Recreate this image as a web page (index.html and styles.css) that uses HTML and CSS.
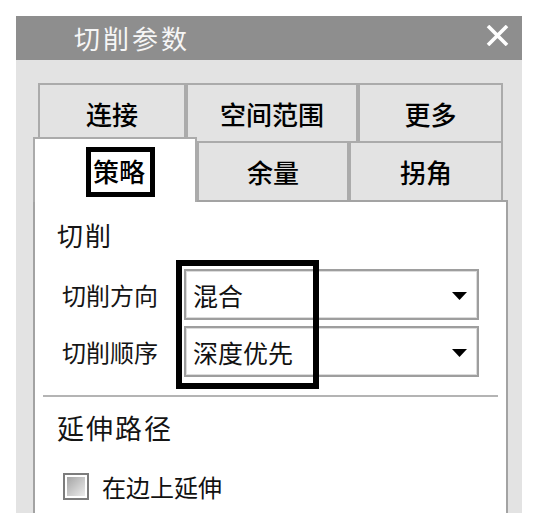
FILE: index.html
```html
<!DOCTYPE html>
<html lang="zh-CN">
<head>
<meta charset="utf-8">
<title>切削参数</title>
<link rel="stylesheet" href="styles.css">
</head>
<body>
<div class="window">
  <div class="titlebar">
    <span class="title">切削参数</span>
    <svg class="close" width="23" height="21" viewBox="0 0 23 21"><path d="M2 1 L21 20 M21 1 L2 20" stroke="#fff" stroke-width="3.6" fill="none"/></svg>
  </div>
  <div class="tabarea">
    <div class="tabrow row1">
      <div class="tab t1">连接</div>
      <div class="tab t2">空间范围</div>
      <div class="tab t3">更多</div>
    </div>
    <div class="tabrow row2">
      <div class="tab active">策略</div>
      <div class="tab t5">余量</div>
      <div class="tab t6">拐角</div>
    </div>
    <div class="content">
      <div class="heading">切削</div>
      <div class="fields">
        <div class="label">切削方向</div>
        <div class="select"><span>混合</span><svg width="15" height="8" viewBox="0 0 15 8"><polygon points="0,0 15,0 7.5,8" fill="#000"/></svg></div>
        <div class="label">切削顺序</div>
        <div class="select"><span>深度优先</span><svg width="15" height="8" viewBox="0 0 15 8"><polygon points="0,0 15,0 7.5,8" fill="#000"/></svg></div>
      </div>
      <div class="sep"></div>
      <div class="heading heading2">延伸路径</div>
      <div class="check">
        <div class="box"><div class="fill"></div></div>
        <span>在边上延伸</span>
      </div>
    </div>
  </div>
  <div class="mark mark1"></div>
  <div class="mark mark2"></div>
</div>
</body>
</html>
```
FILE: styles.css
```css
* { box-sizing: border-box; }
html, body { margin: 0; padding: 0; background: #fff; }
body {
  font-family: "Noto Sans CJK SC", "Noto Sans", sans-serif;
  color: #111;
}
.window {
  position: relative;
  margin: 16px 0 0 16px;
  width: 506px;
  height: 497px;
  background: #e3e3e3;
  overflow: hidden;
}
.titlebar {
  height: 44px;
  background: #8e8e8e;
  display: flex;
  align-items: center;
  justify-content: space-between;
  padding: 0 13px 0 58px;
}
.title {
  color: #f6f6f6;
  font-size: 26px;
  letter-spacing: 3px;
  line-height: 30px;
}
.close { display: block; margin-top: -6px; }
.tabarea {
  padding: 23px 14px 0 17px;
}
.tabrow {
  display: flex;
}
.row1 {
  height: 58px;
  margin: 0 5px;
}
.row2 {
  height: 59px;
  align-items: flex-end;
}
.tab {
  display: flex;
  align-items: center;
  justify-content: center;
  font-size: 26px;
  font-weight: 500;
  color: #000;
  background: #e3e3e3;
  border: 2px solid #ababab;
  border-bottom: none;
  height: 100%;
}
.t1 { width: 148px; }
.t2 { width: 172px; }
.t3 { width: 145px; }
.active {
  width: 164px;
  height: 65px;
  margin-bottom: -2px;
  background: #fff;
  position: relative;
  z-index: 2;
  padding: 0 0 0 8px;
}
.t5 { width: 152px; }
.t6 { width: 154px; }
.content {
  background: #fff;
  border: 2px solid #a3a3a3;
  border-bottom: none;
  height: 330px;
  padding: 18px 0 0 0;
}
.heading {
  font-size: 26px;
  line-height: 30px;
  letter-spacing: 2px;
  padding-left: 22px;
  color: #151515;
}
.fields {
  display: grid;
  grid-template-columns: 122px 295px;
  row-gap: 6px;
  align-items: center;
  margin-top: 19px;
  padding-left: 27px;
}
.label {
  font-size: 24px;
  line-height: 28px;
  color: #151515;
}
.select {
  height: 51px;
  border: 2px solid #9e9e9e;
  box-shadow: inset 0 0 0 1px #dcdcdc;
  display: flex;
  align-items: center;
  justify-content: space-between;
  padding: 0 10px 0 7px;
  font-size: 25px;
  color: #111;
}
.select svg { display: block; margin-top: 2px; }
.sep {
  height: 2px;
  background: #b4b4b4;
  margin: 18px 8px 0 8px;
}
.heading2 {
  font-size: 27px;
  line-height: 32px;
  margin-top: 15px;
}
.check {
  display: flex;
  align-items: center;
  gap: 13px;
  margin-top: 25px;
  padding-left: 28px;
  font-size: 24px;
  color: #111;
}
.box {
  width: 26px;
  height: 27px;
  border: 2px solid #7c7c7c;
  padding: 2px;
  background: #fff;
}
.fill {
  width: 100%;
  height: 100%;
  background: linear-gradient(135deg, #a4a4a4, #ececec);
}
.mark {
  position: absolute;
  border: 6px solid #000;
  z-index: 5;
}
.mark1 {
  left: 70px;
  top: 131px;
  width: 69px;
  height: 50px;
  border-width: 5px;
}
.mark2 {
  left: 160px;
  top: 244px;
  width: 143px;
  height: 129px;
}
```
